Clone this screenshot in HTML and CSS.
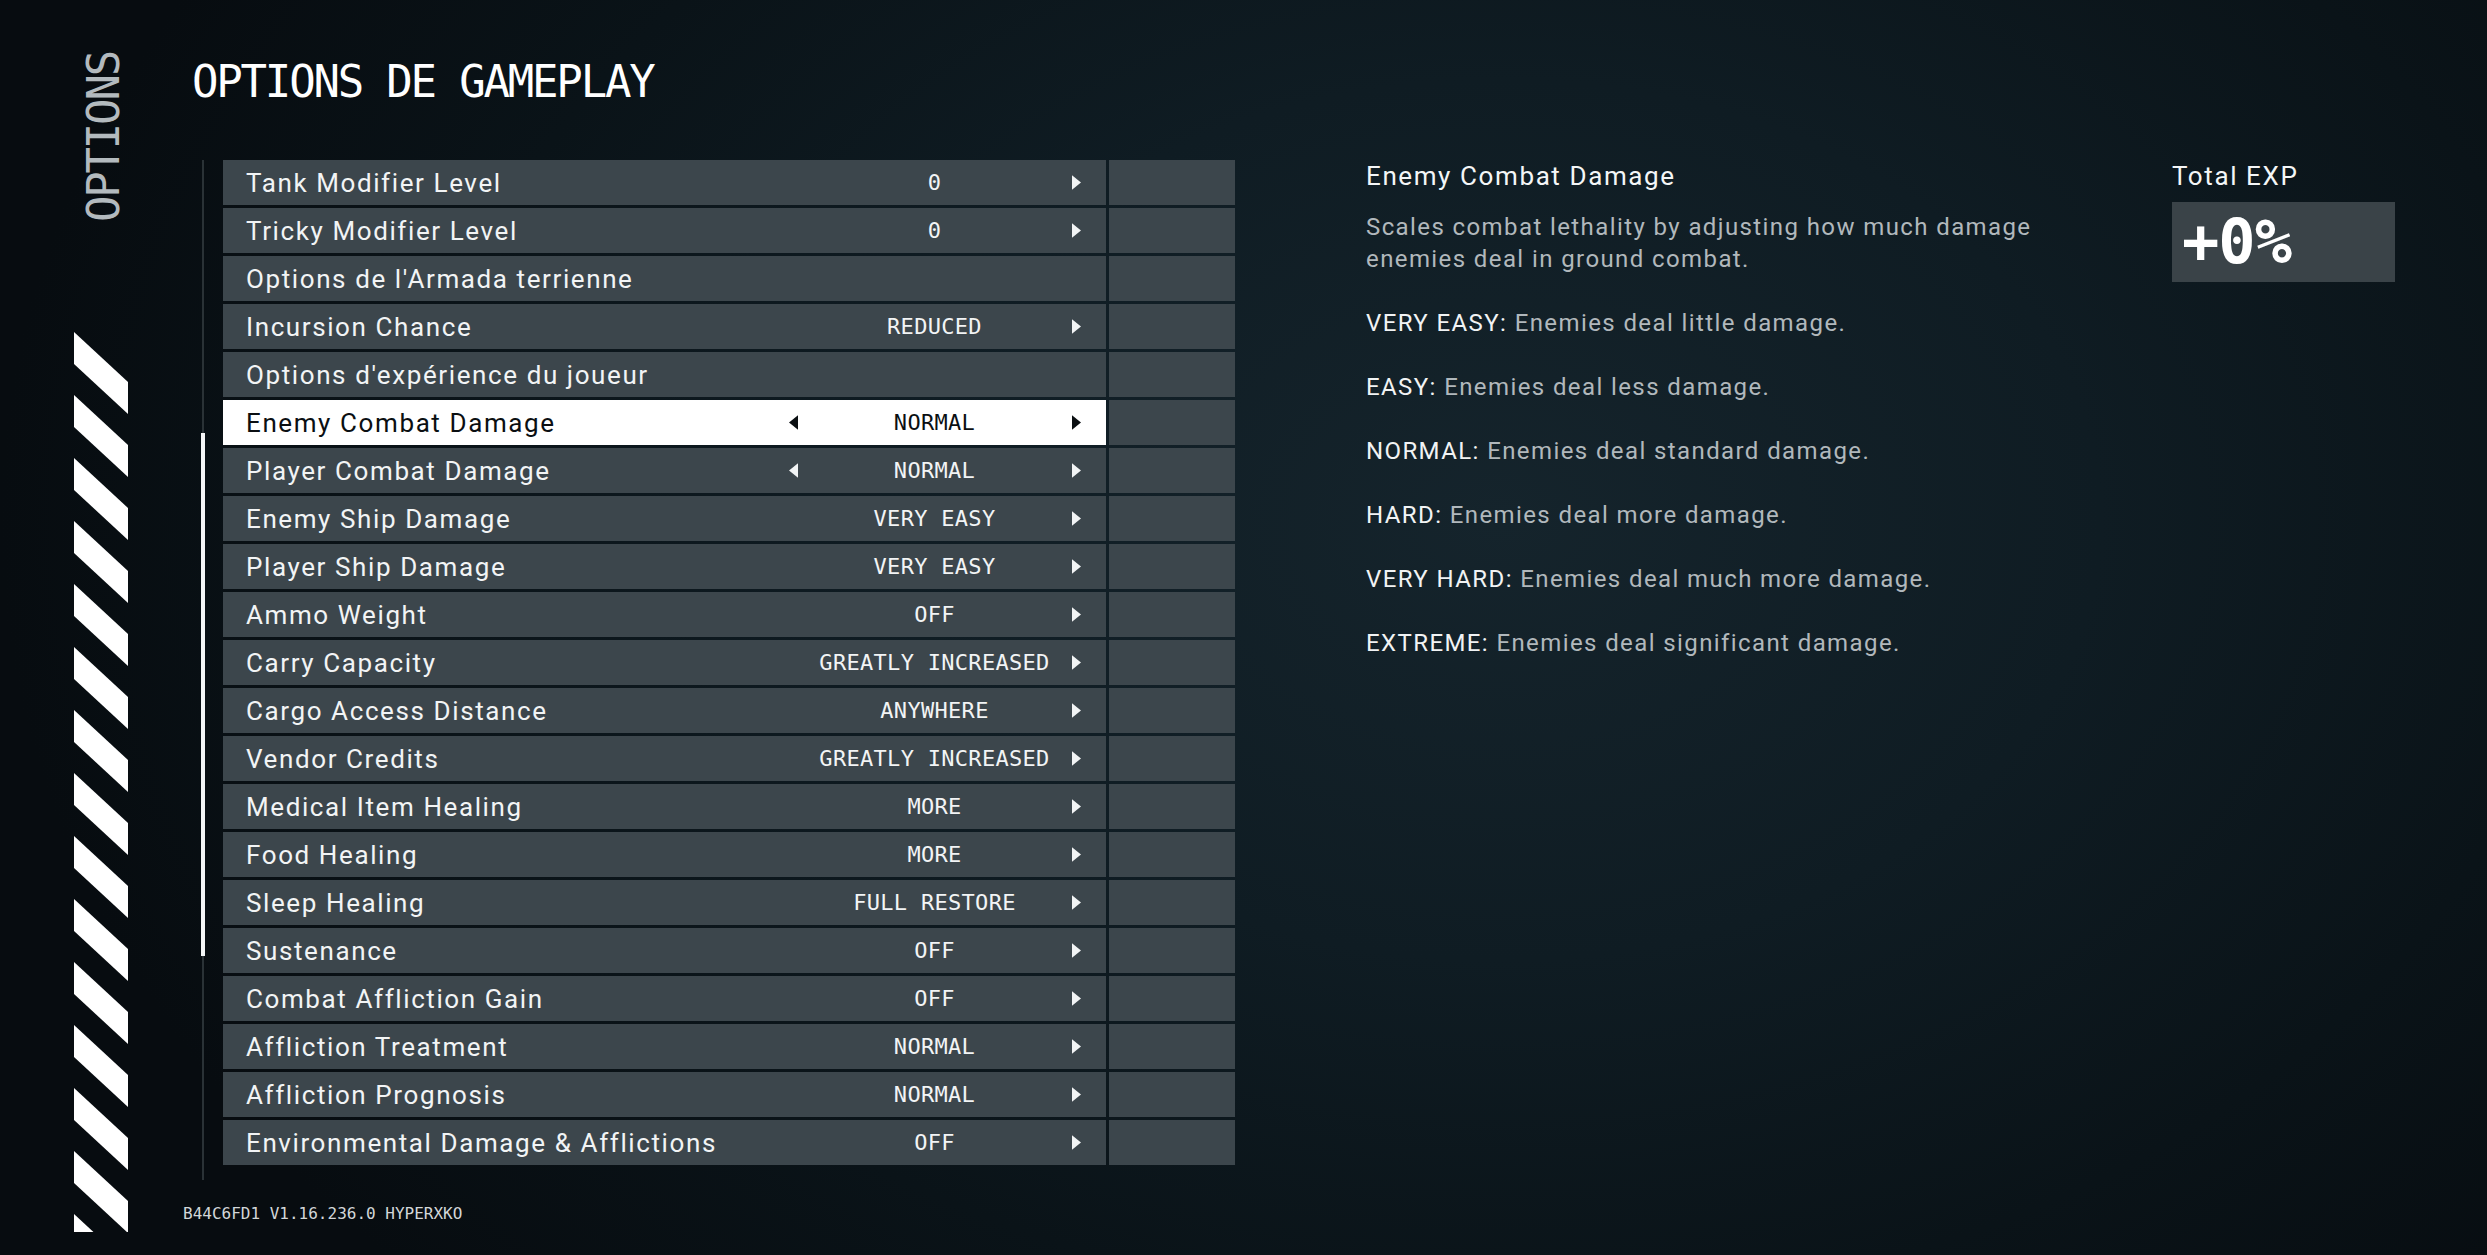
FILE: index.html
```html
<!DOCTYPE html>
<html lang="fr">
<head>
    <meta charset="UTF-8">
    <meta name="viewport" content="width=device-width, initial-scale=1.0">
    <title>Options de gameplay</title>
    <link rel="stylesheet" href="styles.css">
</head>
<body>
<div class="screen">
    <aside class="rail">
        <div class="rail-title">OPTIONS</div>
        <!-- hazard stripes down the left edge -->
        <svg class="hazard" width="54" height="900" viewBox="0 0 54 900">
            <polygon points="0,0 54,50 54,82 0,32"/>
            <polygon points="0,63 54,113 54,145 0,95"/>
            <polygon points="0,126 54,176 54,208 0,158"/>
            <polygon points="0,189 54,239 54,271 0,221"/>
            <polygon points="0,252 54,302 54,334 0,284"/>
            <polygon points="0,315 54,365 54,397 0,347"/>
            <polygon points="0,378 54,428 54,460 0,410"/>
            <polygon points="0,441 54,491 54,523 0,473"/>
            <polygon points="0,504 54,554 54,586 0,536"/>
            <polygon points="0,567 54,617 54,649 0,599"/>
            <polygon points="0,630 54,680 54,712 0,662"/>
            <polygon points="0,693 54,743 54,775 0,725"/>
            <polygon points="0,756 54,806 54,838 0,788"/>
            <polygon points="0,819 54,869 54,901 0,851"/>
            <polygon points="0,882 54,932 54,964 0,914"/>
        </svg>
    </aside>

    <main class="content">
        <h1 class="page-title">OPTIONS DE GAMEPLAY</h1>

        <div class="panes">
            <div class="list-wrap">
                <div class="scroll-track"><div class="scroll-thumb"></div></div>

                <ul class="option-list">
                    <li class="option">
                        <div class="option-main">
                            <span class="option-label">Tank Modifier Level</span>
                            <span class="option-control">
                                <span class="arrow"></span>
                                <span class="option-value">0</span>
                                <span class="arrow"><svg width="10" height="16" viewBox="0 0 10 16"><polygon points="0,0 10,8 0,16"/></svg></span>
                            </span>
                        </div>
                        <div class="option-side"></div>
                    </li>
                    <li class="option">
                        <div class="option-main">
                            <span class="option-label">Tricky Modifier Level</span>
                            <span class="option-control">
                                <span class="arrow"></span>
                                <span class="option-value">0</span>
                                <span class="arrow"><svg width="10" height="16" viewBox="0 0 10 16"><polygon points="0,0 10,8 0,16"/></svg></span>
                            </span>
                        </div>
                        <div class="option-side"></div>
                    </li>
                    <li class="option">
                        <div class="option-main">
                            <span class="option-label">Options de l'Armada terrienne</span>
                        </div>
                        <div class="option-side"></div>
                    </li>
                    <li class="option">
                        <div class="option-main">
                            <span class="option-label">Incursion Chance</span>
                            <span class="option-control">
                                <span class="arrow"></span>
                                <span class="option-value">REDUCED</span>
                                <span class="arrow"><svg width="10" height="16" viewBox="0 0 10 16"><polygon points="0,0 10,8 0,16"/></svg></span>
                            </span>
                        </div>
                        <div class="option-side"></div>
                    </li>
                    <li class="option">
                        <div class="option-main">
                            <span class="option-label">Options d'expérience du joueur</span>
                        </div>
                        <div class="option-side"></div>
                    </li>
                    <li class="option selected">
                        <div class="option-main">
                            <span class="option-label">Enemy Combat Damage</span>
                            <span class="option-control">
                                <span class="arrow"><svg width="10" height="16" viewBox="0 0 10 16"><polygon points="10,0 0,8 10,16"/></svg></span>
                                <span class="option-value">NORMAL</span>
                                <span class="arrow"><svg width="10" height="16" viewBox="0 0 10 16"><polygon points="0,0 10,8 0,16"/></svg></span>
                            </span>
                        </div>
                        <div class="option-side"></div>
                    </li>
                    <li class="option">
                        <div class="option-main">
                            <span class="option-label">Player Combat Damage</span>
                            <span class="option-control">
                                <span class="arrow"><svg width="10" height="16" viewBox="0 0 10 16"><polygon points="10,0 0,8 10,16"/></svg></span>
                                <span class="option-value">NORMAL</span>
                                <span class="arrow"><svg width="10" height="16" viewBox="0 0 10 16"><polygon points="0,0 10,8 0,16"/></svg></span>
                            </span>
                        </div>
                        <div class="option-side"></div>
                    </li>
                    <li class="option">
                        <div class="option-main">
                            <span class="option-label">Enemy Ship Damage</span>
                            <span class="option-control">
                                <span class="arrow"></span>
                                <span class="option-value">VERY EASY</span>
                                <span class="arrow"><svg width="10" height="16" viewBox="0 0 10 16"><polygon points="0,0 10,8 0,16"/></svg></span>
                            </span>
                        </div>
                        <div class="option-side"></div>
                    </li>
                    <li class="option">
                        <div class="option-main">
                            <span class="option-label">Player Ship Damage</span>
                            <span class="option-control">
                                <span class="arrow"></span>
                                <span class="option-value">VERY EASY</span>
                                <span class="arrow"><svg width="10" height="16" viewBox="0 0 10 16"><polygon points="0,0 10,8 0,16"/></svg></span>
                            </span>
                        </div>
                        <div class="option-side"></div>
                    </li>
                    <li class="option">
                        <div class="option-main">
                            <span class="option-label">Ammo Weight</span>
                            <span class="option-control">
                                <span class="arrow"></span>
                                <span class="option-value">OFF</span>
                                <span class="arrow"><svg width="10" height="16" viewBox="0 0 10 16"><polygon points="0,0 10,8 0,16"/></svg></span>
                            </span>
                        </div>
                        <div class="option-side"></div>
                    </li>
                    <li class="option">
                        <div class="option-main">
                            <span class="option-label">Carry Capacity</span>
                            <span class="option-control">
                                <span class="arrow"></span>
                                <span class="option-value">GREATLY INCREASED</span>
                                <span class="arrow"><svg width="10" height="16" viewBox="0 0 10 16"><polygon points="0,0 10,8 0,16"/></svg></span>
                            </span>
                        </div>
                        <div class="option-side"></div>
                    </li>
                    <li class="option">
                        <div class="option-main">
                            <span class="option-label">Cargo Access Distance</span>
                            <span class="option-control">
                                <span class="arrow"></span>
                                <span class="option-value">ANYWHERE</span>
                                <span class="arrow"><svg width="10" height="16" viewBox="0 0 10 16"><polygon points="0,0 10,8 0,16"/></svg></span>
                            </span>
                        </div>
                        <div class="option-side"></div>
                    </li>
                    <li class="option">
                        <div class="option-main">
                            <span class="option-label">Vendor Credits</span>
                            <span class="option-control">
                                <span class="arrow"></span>
                                <span class="option-value">GREATLY INCREASED</span>
                                <span class="arrow"><svg width="10" height="16" viewBox="0 0 10 16"><polygon points="0,0 10,8 0,16"/></svg></span>
                            </span>
                        </div>
                        <div class="option-side"></div>
                    </li>
                    <li class="option">
                        <div class="option-main">
                            <span class="option-label">Medical Item Healing</span>
                            <span class="option-control">
                                <span class="arrow"></span>
                                <span class="option-value">MORE</span>
                                <span class="arrow"><svg width="10" height="16" viewBox="0 0 10 16"><polygon points="0,0 10,8 0,16"/></svg></span>
                            </span>
                        </div>
                        <div class="option-side"></div>
                    </li>
                    <li class="option">
                        <div class="option-main">
                            <span class="option-label">Food Healing</span>
                            <span class="option-control">
                                <span class="arrow"></span>
                                <span class="option-value">MORE</span>
                                <span class="arrow"><svg width="10" height="16" viewBox="0 0 10 16"><polygon points="0,0 10,8 0,16"/></svg></span>
                            </span>
                        </div>
                        <div class="option-side"></div>
                    </li>
                    <li class="option">
                        <div class="option-main">
                            <span class="option-label">Sleep Healing</span>
                            <span class="option-control">
                                <span class="arrow"></span>
                                <span class="option-value">FULL RESTORE</span>
                                <span class="arrow"><svg width="10" height="16" viewBox="0 0 10 16"><polygon points="0,0 10,8 0,16"/></svg></span>
                            </span>
                        </div>
                        <div class="option-side"></div>
                    </li>
                    <li class="option">
                        <div class="option-main">
                            <span class="option-label">Sustenance</span>
                            <span class="option-control">
                                <span class="arrow"></span>
                                <span class="option-value">OFF</span>
                                <span class="arrow"><svg width="10" height="16" viewBox="0 0 10 16"><polygon points="0,0 10,8 0,16"/></svg></span>
                            </span>
                        </div>
                        <div class="option-side"></div>
                    </li>
                    <li class="option">
                        <div class="option-main">
                            <span class="option-label">Combat Affliction Gain</span>
                            <span class="option-control">
                                <span class="arrow"></span>
                                <span class="option-value">OFF</span>
                                <span class="arrow"><svg width="10" height="16" viewBox="0 0 10 16"><polygon points="0,0 10,8 0,16"/></svg></span>
                            </span>
                        </div>
                        <div class="option-side"></div>
                    </li>
                    <li class="option">
                        <div class="option-main">
                            <span class="option-label">Affliction Treatment</span>
                            <span class="option-control">
                                <span class="arrow"></span>
                                <span class="option-value">NORMAL</span>
                                <span class="arrow"><svg width="10" height="16" viewBox="0 0 10 16"><polygon points="0,0 10,8 0,16"/></svg></span>
                            </span>
                        </div>
                        <div class="option-side"></div>
                    </li>
                    <li class="option">
                        <div class="option-main">
                            <span class="option-label">Affliction Prognosis</span>
                            <span class="option-control">
                                <span class="arrow"></span>
                                <span class="option-value">NORMAL</span>
                                <span class="arrow"><svg width="10" height="16" viewBox="0 0 10 16"><polygon points="0,0 10,8 0,16"/></svg></span>
                            </span>
                        </div>
                        <div class="option-side"></div>
                    </li>
                    <li class="option">
                        <div class="option-main">
                            <span class="option-label">Environmental Damage &amp; Afflictions</span>
                            <span class="option-control">
                                <span class="arrow"></span>
                                <span class="option-value">OFF</span>
                                <span class="arrow"><svg width="10" height="16" viewBox="0 0 10 16"><polygon points="0,0 10,8 0,16"/></svg></span>
                            </span>
                        </div>
                        <div class="option-side"></div>
                    </li>
                </ul>
            </div>

            <section class="details">
                <h2 class="details-title">Enemy Combat Damage</h2>
                <p class="details-text">Scales combat lethality by adjusting how much damage enemies deal in ground combat.</p>
                <p class="details-text"><span class="level">VERY EASY:</span> Enemies deal little damage.</p>
                <p class="details-text"><span class="level">EASY:</span> Enemies deal less damage.</p>
                <p class="details-text"><span class="level">NORMAL:</span> Enemies deal standard damage.</p>
                <p class="details-text"><span class="level">HARD:</span> Enemies deal more damage.</p>
                <p class="details-text"><span class="level">VERY HARD:</span> Enemies deal much more damage.</p>
                <p class="details-text"><span class="level">EXTREME:</span> Enemies deal significant damage.</p>
            </section>

            <section class="exp">
                <h2 class="details-title">Total EXP</h2>
                <div class="exp-box">+0%</div>
            </section>
        </div>

        <div class="build-tag">B44C6FD1 V1.16.236.0 HYPERXKO</div>
    </main>
</div>
</body>
</html>
```

FILE: styles.css
```css
* {
    margin: 0;
    padding: 0;
    box-sizing: border-box;
}
body
{
    width: 2487px;
    height: 1255px;
    overflow: hidden;
    background: radial-gradient(ellipse 1500px 1100px at 1500px 520px, #15242c 0%, #0f1c23 40%, #0a1318 72%, #070c10 100%);
    color: #f2f4f5;
    font-family: Roboto, "Noto Sans", sans-serif;
}
.screen
{
    display: flex;
    height: 100%;
}

/* left rail */
.rail
{
    width: 183px;
    flex: 0 0 183px;
    padding: 52px 0 0 74px;
    display: flex;
    flex-direction: column;
}
.rail-title
{
    writing-mode: vertical-rl;
    transform: rotate(180deg);
    margin-left: 8px;
    font-family: "DejaVu Sans Mono", monospace;
    font-size: 44px;
    line-height: 1;
    letter-spacing: -2.2px;
    color: #b3babe;
}
.hazard
{
    display: block;
    margin-top: 110px;
    fill: #ffffff;
}

/* main column */
.content
{
    flex: 1;
    padding-top: 60px;
}
.page-title
{
    margin-left: 9px;
    font-family: "DejaVu Sans Mono", monospace;
    font-weight: normal;
    font-size: 44px;
    line-height: 1;
    letter-spacing: -2.2px;
    color: #ffffff;
}
.panes
{
    display: flex;
    align-items: flex-start;
    margin-top: 56px;
}
.list-wrap
{
    display: flex;
    margin-left: 18px;
    height: 1020px;
}
.scroll-track
{
    width: 4px;
    height: 100%;
    background: linear-gradient(to right, transparent 0 1px, #2a3236 1px 3px, transparent 3px);
}
.scroll-thumb
{
    width: 4px;
    height: 523px;
    margin-top: 273px;
    background: #f4f6f7;
}
.option-list
{
    list-style: none;
    margin-left: 18px;
}
.option
{
    display: grid;
    grid-template-columns: 883px 126px;
    column-gap: 3px;
    height: 45px;
    margin-bottom: 3px;
}
.option-main
{
    display: flex;
    align-items: center;
    padding: 0 20px 0 23px;
    background: #3c464c;
}
.option-side
{
    background: #3c464c;
}
.option-label
{
    flex: 1;
    font-size: 26px;
    line-height: 1;
    letter-spacing: 1.6px;
    white-space: nowrap;
}
.option-control
{
    display: grid;
    grid-template-columns: 20px 263px 20px;
    align-items: center;
    justify-items: center;
}
.option-value
{
    font-family: "DejaVu Sans Mono", monospace;
    font-size: 22px;
    line-height: 1;
    letter-spacing: 0.3px;
    white-space: nowrap;
}
.arrow
{
    display: flex;
    align-items: center;
    height: 16px;
}
.arrow svg
{
    display: block;
    width: 9px;
    height: 15px;
    fill: currentColor;
}
.option.selected .option-main
{
    background: #ffffff;
    color: #0b0f12;
}

/* description column */
.details
{
    width: 700px;
    margin-left: 131px;
}
.details-title
{
    font-weight: normal;
    font-size: 26px;
    line-height: 32px;
    letter-spacing: 1.6px;
    color: #f4f6f7;
}
.details-text
{
    font-size: 24px;
    line-height: 32px;
    letter-spacing: 1.4px;
    color: #b1b8bc;
}
.details-title + .details-text
{
    margin-top: 19px;
}
.details-text + .details-text
{
    margin-top: 32px;
}
.level
{
    color: #f1f3f4;
}

.exp
{
    width: 223px;
    margin-left: 106px;
}
.exp-box
{
    height: 80px;
    margin-top: 10px;
    padding-left: 10px;
    background: #3a4348;
    font-family: "DejaVu Sans Mono", monospace;
    font-weight: bold;
    font-size: 62px;
    line-height: 80px;
    letter-spacing: -1px;
    color: #ffffff;
}

.build-tag
{
    margin-top: 26px;
    font-family: "DejaVu Sans Mono", monospace;
    font-size: 16px;
    line-height: 16px;
    color: #d3d7d9;
}
```
